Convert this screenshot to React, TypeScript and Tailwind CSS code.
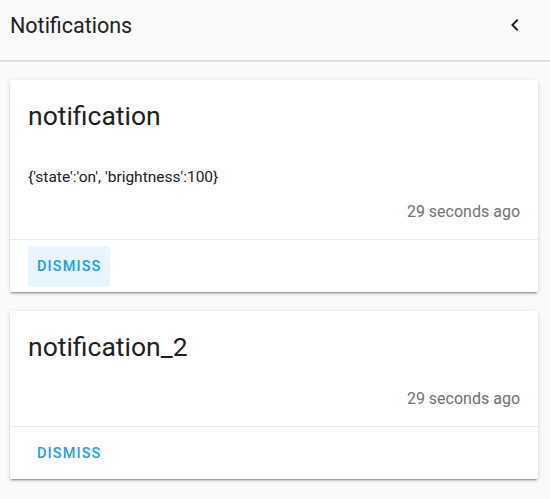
const notifications = [
  {
    id: "notification",
    title: "notification",
    message: "{'state':'on', 'brightness':100}",
    time: "29 seconds ago",
    focused: true,
  },
  {
    id: "notification_2",
    title: "notification_2",
    message: "",
    time: "29 seconds ago",
    focused: false,
  },
];

function ChevronLeft() {
  return (
    <svg viewBox="0 0 24 24" className="w-6 h-6" fill="#212121">
      <path d="M15.41,16.58L10.83,12L15.41,7.41L14,6L8,12L14,18L15.41,16.58Z" />
    </svg>
  );
}

export default function App() {
  return (
    <div
      className="min-h-[499px] bg-[#fafafa] text-[#212121]"
      style={{ fontFamily: "Roboto, 'Noto Sans', sans-serif" }}
    >
      {/* Header */}
      <header className="h-[60px] flex items-start justify-between pl-[10px] pr-[23px] border-b-2 border-[#e0e0e0] box-content">
        <h1 className="mt-[9.5px] text-[21.5px] leading-[32px] font-normal">Notifications</h1>
        <button className="mt-[13px]">
          <ChevronLeft />
        </button>
      </header>

      {/* Cards */}
      <div className="pt-[18px] pl-[10px] pr-[12px] flex flex-col gap-[19px]">
        {notifications.map((n) => (
          <div
            key={n.id}
            className="bg-white rounded-[2px] shadow-[0_2px_2px_0_rgba(0,0,0,0.14),0_1px_5px_0_rgba(0,0,0,0.12),0_3px_1px_-2px_rgba(0,0,0,0.2)]"
          >
            <div className="pt-[18px] px-[18px] pb-[16px] flex flex-col">
              <div className="text-[26.5px] leading-[35px] mb-[24px]">{n.title}</div>
              {n.message && (
                <div className="text-[15.5px] leading-[22px] mt-[9px] mb-[13px]">{n.message}</div>
              )}
              <div className="text-[16px] leading-[22px] text-right text-[#727272]">{n.time}</div>
            </div>
            <div className="border-t border-[#e8e8e8] pt-[6px] pb-[5px] px-[18px] flex">
              <button
                className={
                  "h-[41px] px-[9px] rounded-[4px] text-[14.5px] font-medium tracking-[1.1px] text-[#1e9ef0] " +
                  (n.focused ? "bg-[#e6f5fe]" : "")
                }
              >
                DISMISS
              </button>
            </div>
          </div>
        ))}
      </div>
    </div>
  );
}
